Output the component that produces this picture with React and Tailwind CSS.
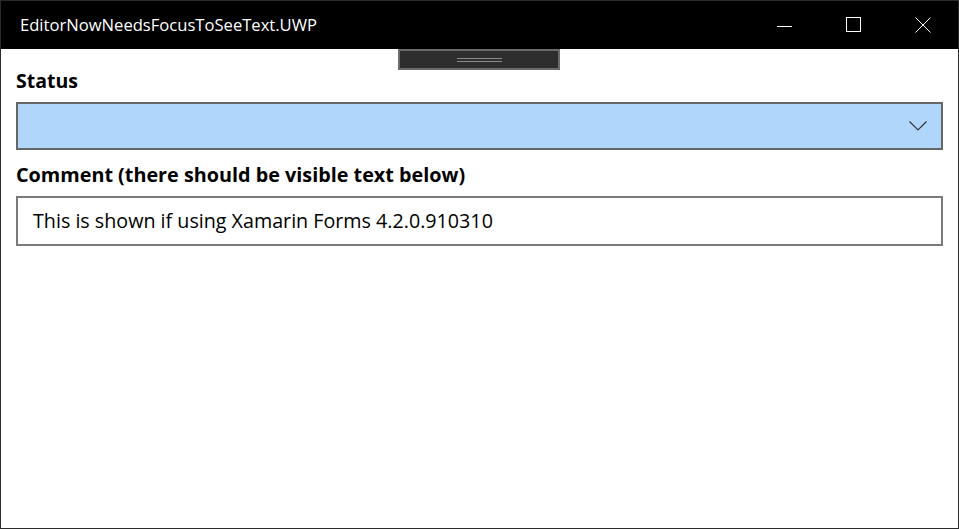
import React from "react";

const font = { fontFamily: '"Open Sans", "Noto Sans", sans-serif' };

const TitleBar = () => (
  <div className="flex h-[48px] items-center bg-black text-white">
    <span className="ml-[19px] flex-1 text-[16.6px]">EditorNowNeedsFocusToSeeText.UWP</span>
    {/* window buttons */}
    <div className="flex h-full">
      <button className="flex h-full w-[46px] items-center justify-center">
        <svg width="16" height="16" viewBox="0 0 16 16">
          <path d="M0 9.5h15" stroke="white" strokeWidth="1" />
        </svg>
      </button>
      <button className="ml-[23px] flex h-full w-[46px] items-center justify-center">
        <svg width="16" height="16" viewBox="0 0 16 16">
          <rect x="0.5" y="0.5" width="14" height="14" fill="none" stroke="white" strokeWidth="1" />
        </svg>
      </button>
      <button className="ml-[23px] mr-[12px] flex h-full w-[46px] items-center justify-center">
        <svg width="16" height="16" viewBox="0 0 16 16">
          <path d="M0.5 0.5l15 15M15.5 0.5l-15 15" stroke="white" strokeWidth="1" />
        </svg>
      </button>
    </div>
  </div>
);

export default function App() {
  return (
    <div
      className="relative flex h-[529px] w-[959px] flex-col overflow-hidden border border-[#2b2b2b] bg-white"
      style={font}
    >
      <TitleBar />

      {/* debug toolbar handle */}
      <div className="absolute left-[397px] top-[48px] flex h-[21px] w-[162px] flex-col items-center justify-center gap-[2px] border-2 border-[#6b6b6b] bg-[#2e2e2e]">
        <div className="h-px w-[45px] bg-[#8a8a8a]" />
        <div className="h-px w-[45px] bg-[#8a8a8a]" />
      </div>

      <main className="flex flex-col px-[15px] pt-[20px]">
        <label className="text-[19.5px] font-bold leading-[24px] text-black">Status</label>
        <div className="mt-[9px] flex h-[48px] items-center justify-end border-2 border-[#666666] bg-[#b0d6fc] pr-[14px]">
          <svg width="18" height="10" viewBox="0 0 18 10">
            <path d="M0.5 0.5l8.5 8.5 8.5-8.5" fill="none" stroke="#333" strokeWidth="1.2" />
          </svg>
        </div>

        <label className="mt-[13px] text-[19.8px] font-bold leading-[24px] text-black">
          Comment (there should be visible text below)
        </label>
        <div className="mt-[9px] flex h-[50px] items-center border-2 border-[#7a7a7a] px-[15px]">
          <span className="text-[19.7px] text-black">This is shown if using Xamarin Forms 4.2.0.910310</span>
        </div>
      </main>
    </div>
  );
}
